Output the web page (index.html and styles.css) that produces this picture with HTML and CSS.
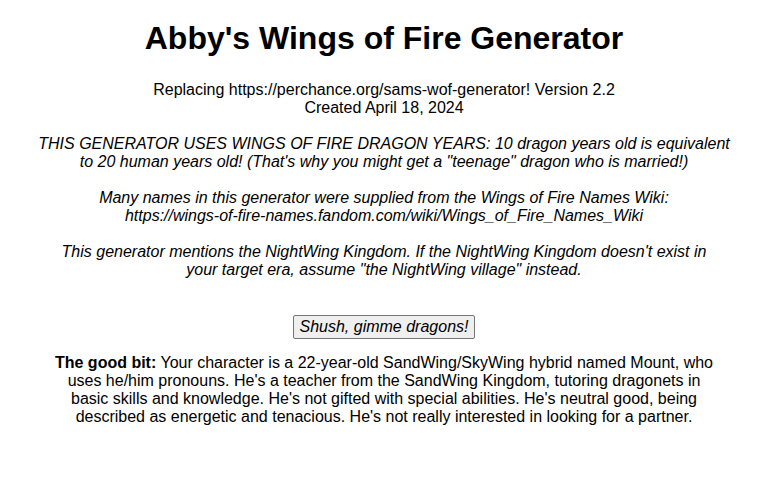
FILE: index.html
```html
<!DOCTYPE html>
<html>
<head>
<meta charset="utf-8">
<title>Abby's Wings of Fire Generator</title>
<link rel="stylesheet" href="styles.css">
</head>
<body>
<main class="page">
  <h1 class="title">Abby's Wings of Fire Generator</h1>
  <p class="para">Replacing https://perchance.org/sams-wof-generator! Version 2.2<br>Created April 18, 2024</p>
  <p class="para italic">THIS GENERATOR USES WINGS OF FIRE DRAGON YEARS: 10 dragon years old is equivalent to 20 human years old! (That's why you might get a "teenage" dragon who is married!)</p>
  <p class="para italic">Many names in this generator were supplied from the Wings of Fire Names Wiki:<br>https://wings-of-fire-names.fandom.com/wiki/Wings_of_Fire_Names_Wiki</p>
  <p class="para italic">This generator mentions the NightWing Kingdom. If the NightWing Kingdom doesn't exist in<br>your target era, assume "the NightWing village" instead.</p>
  <div class="actions"><button class="btn" type="button">Shush, gimme dragons!</button></div>
  <p class="para result"><span class="label">The good bit:</span> Your character is a 22-year-old SandWing/SkyWing hybrid named Mount, who uses he/him pronouns. He's a teacher from the SandWing Kingdom, tutoring dragonets in basic skills and knowledge. He's not gifted with special abilities. He's neutral good, being described as energetic and tenacious. He's not really interested in looking for a partner.</p>
</main>
</body>
</html>
```
FILE: styles.css
```css
html, body {
  margin: 0;
  padding: 0;
  background: #ffffff;
}
body {
  font-family: "Liberation Sans", Arial, sans-serif;
  font-size: 16px;
  line-height: 18px;
  color: #000000;
}
.page {
  padding: 20px 38px 0 38px;
  text-align: center;
}
.title {
  font-size: 32px;
  line-height: 37px;
  font-weight: bold;
  margin: 0 0 24px 0;
}
.para {
  margin: 0 0 18px 0;
}
.italic {
  font-style: italic;
}
.label {
  font-weight: bold;
}
.actions {
  margin: 36px 0 15px 0;
}
.btn {
  font-family: "Liberation Sans", Arial, sans-serif;
  font-size: 16px;
  font-style: italic;
  line-height: 18px;
  color: #000;
  background: #efefef;
  border: 1px solid #767676;
  border-radius: 2px;
  padding: 2px 6px;
}
.result {
  padding: 0 16px;
}
```
